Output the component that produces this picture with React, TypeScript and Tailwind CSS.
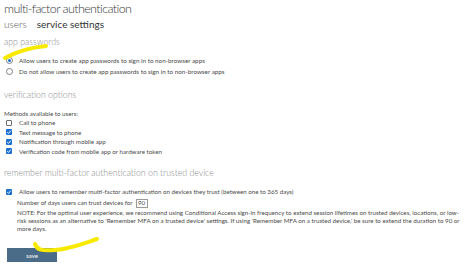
import React from "react";

const Radio = ({ checked }: { checked?: boolean }) => (
  <span className="flex h-[7px] w-[7px] items-center justify-center rounded-full border border-[#808080] bg-white">
    {checked && <span className="h-[3.5px] w-[3.5px] rounded-full bg-[#1d6fd0]" />}
  </span>
);

const Check = ({ checked }: { checked?: boolean }) =>
  checked ? (
    <span className="flex h-[6px] w-[6px] items-center justify-center rounded-[1px] bg-[#1d6fd0]">
      <svg viewBox="0 0 10 10" className="h-[6px] w-[6px]">
        <path d="M2 5.2 L4.2 7.3 L8 2.8" fill="none" stroke="white" strokeWidth="1.6" />
      </svg>
    </span>
  ) : (
    <span className="h-[6px] w-[6px] rounded-[1px] border border-[#6d6d6d] bg-white" />
  );

const Heading = ({ children, className }: { children: React.ReactNode; className?: string }) => (
  <div className={`h-[14px] text-[8.75px] leading-[14px] font-light text-[#8c8c8c] ${className ?? ""}`}>{children}</div>
);

const methods = [
  { label: "Call to phone", on: false },
  { label: "Text message to phone", on: true },
  { label: "Notification through mobile app", on: true },
  { label: "Verification code from mobile app or hardware token", on: true },
];

export default function App() {
  return (
    <div className="relative h-[274px] w-[474px] overflow-hidden bg-white font-['Lato','Open_Sans',sans-serif] text-[#4a4a4a]">
      <div className="flex flex-col pl-[4px]">
        <h1 className="h-[18px] text-[12.5px] leading-[18px] font-light tracking-[-0.6px] text-[#3b3b3b]">multi-factor authentication</h1>
        <div className="flex h-[12px] items-center gap-[10px] text-[10px] leading-[12px] text-[#555]">
          <span className="font-light">users</span>
          <span className="text-[#333]">service settings</span>
        </div>

        <Heading className="mt-[5px]">app passwords</Heading>
        <div className="mt-[6px] flex flex-col text-[6.3px]">
          <label className="flex h-[11px] items-center gap-[6px] pl-[2px]">
            <Radio checked />
            <span>Allow users to create app passwords to sign in to non-browser apps</span>
          </label>
          <label className="flex h-[11px] items-center gap-[6px] pl-[2px]">
            <Radio />
            <span>Do not allow users to create app passwords to sign in to non-browser apps</span>
          </label>
        </div>

        <Heading className="mt-[11px]">verification options</Heading>
        <div className="mt-[7px] flex h-[9px] items-center text-[6.2px]">Methods available to users:</div>
        <div className="flex flex-col text-[6.2px]">
          {methods.map((m) => (
            <div key={m.label} className="flex h-[9.5px] items-center gap-[7px] pl-[2px]">
              <Check checked={m.on} />
              <span>{m.label}</span>
            </div>
          ))}
        </div>

        <Heading className="mt-[10px]">remember multi-factor authentication on trusted device</Heading>
        <div className="mt-[7px] flex flex-col text-[6.2px]">
          <div className="flex h-[10px] items-center gap-[7px] pl-[2px]">
            <Check checked />
            <span>Allow users to remember multi-factor authentication on devices they trust (between one to 365 days)</span>
          </div>
          <div className="flex flex-col pl-[13px]">
            <div className="flex h-[12px] items-center gap-[3px]">
              <span>Number of days users can trust devices for</span>
              <span className="flex h-[9px] w-[12px] items-center justify-center border border-[#9a9a9a]">90</span>
            </div>
            <div className="flex flex-col leading-[8px]">
              <span>NOTE: For the optimal user experience, we recommend using Conditional Access sign-in frequency to extend session lifetimes on trusted devices, locations, or low-</span>
              <span>risk sessions as an alternative to 'Remember MFA on a trusted device' settings. If using 'Remember MFA on a trusted device,' be sure to extend the duration to 90 or</span>
              <span>more days.</span>
            </div>
          </div>
        </div>

        <button className="mt-[15px] ml-[3px] h-[14px] w-[50px] bg-[#4a6c89] text-[6px] text-white">save</button>
      </div>

      <svg className="pointer-events-none absolute left-0 top-0" width="474" height="274" viewBox="0 0 474 274">
        <path d="M5 58 C14 53 26 48 46 46" fill="none" stroke="#f7ea00" strokeWidth="4" strokeLinecap="round" />
        <path d="M35 244 C37 250 42 251 55 250 C70 249 85 243 97 239" fill="none" stroke="#f7ea00" strokeWidth="4" strokeLinecap="round" />
      </svg>
    </div>
  );
}
